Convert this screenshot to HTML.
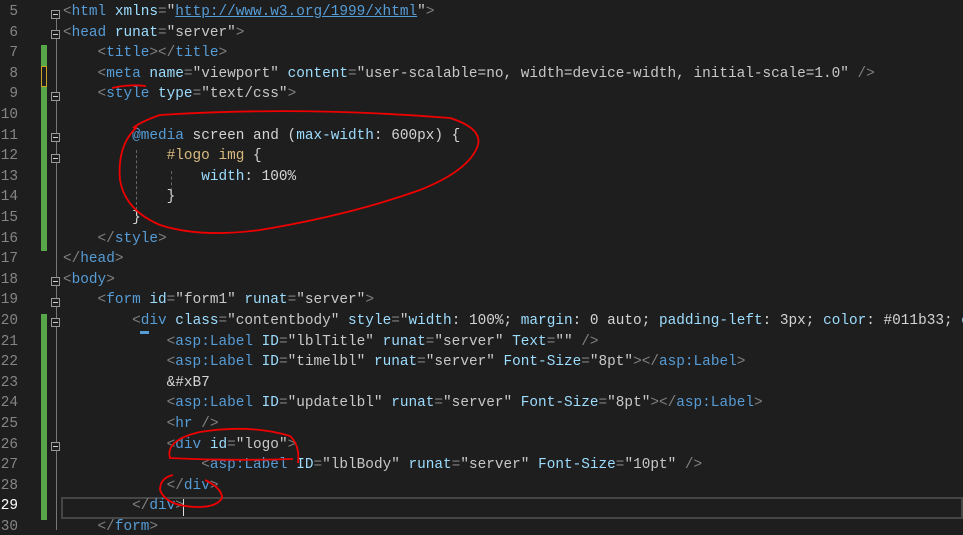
<!DOCTYPE html>
<html><head><meta charset="utf-8"><style>
body{margin:0;width:963px;height:530px;overflow:hidden;background:#1e1e1e;position:relative;font-family:"Liberation Mono",monospace;}
.ln{position:absolute;left:0;width:18px;text-align:right;color:#858585;font-size:14.4px;}
.c{position:absolute;left:63px;white-space:pre;font-size:14.4px;color:#d4d4d4;}
.b{color:#808080}.t{color:#569cd6}.a{color:#9cdcfe}.s{color:#c8c8c8}.y{color:#d7ba7d}.w{color:#d4d4d4}
.u{color:#569cd6;text-decoration:underline}
.fold{position:absolute;left:51px;width:9px;height:9px;border:1px solid #999;box-sizing:border-box;background:#1e1e1e}
.fold:after{content:"";position:absolute;left:1px;top:3px;width:5px;height:1px;background:#ccc}
</style></head><body>
<div style="position:absolute;left:41px;top:45px;width:6px;height:206px;background:#57a64a"></div>
<div style="position:absolute;left:41px;top:66px;width:6px;height:21px;background:#1e1e1e;border:1px solid #c9a227;box-sizing:border-box"></div>
<div style="position:absolute;left:41px;top:314px;width:6px;height:206px;background:#57a64a"></div>
<div style="position:absolute;left:56px;top:10px;width:1px;height:520px;background:#777"></div>
<div style="position:absolute;left:61px;top:497px;width:902px;height:22px;border:2px solid #464646;box-sizing:border-box"></div>
<div style="position:absolute;left:136px;top:150px;height:60px;border-left:1px dashed #666"></div>
<div style="position:absolute;left:171px;top:171px;height:20px;border-left:1px dashed #666"></div>
<div style="position:absolute;left:140px;top:331px;width:9px;height:3px;background:#569cd6"></div>
<div style="position:absolute;left:183px;top:499px;width:1px;height:17px;background:#ddd"></div>
<div class="fold" style="top:10px"></div><div class="fold" style="top:30px"></div>
<div class="fold" style="top:92px"></div><div class="fold" style="top:133px"></div>
<div class="fold" style="top:154px"></div><div class="fold" style="top:277px"></div>
<div class="fold" style="top:298px"></div><div class="fold" style="top:318px"></div>
<div class="fold" style="top:442px"></div>
<div class="ln" style="top:4px">5</div><div class="c" style="top:4px"><span class="b">&lt;</span><span class="t">html</span> <span class="a">xmlns</span><span class="b">=</span><span class="s">"</span><span class="u">http://www.w3.org/1999/xhtml</span><span class="s">"</span><span class="b">&gt;</span></div>
<div class="ln" style="top:24.6px">6</div><div class="c" style="top:24.6px"><span class="b">&lt;</span><span class="t">head</span> <span class="a">runat</span><span class="b">=</span><span class="s">"server"</span><span class="b">&gt;</span></div>
<div class="ln" style="top:45.2px">7</div><div class="c" style="top:45.2px">    <span class="b">&lt;</span><span class="t">title</span><span class="b">&gt;&lt;/</span><span class="t">title</span><span class="b">&gt;</span></div>
<div class="ln" style="top:65.8px">8</div><div class="c" style="top:65.8px">    <span class="b">&lt;</span><span class="t">meta</span> <span class="a">name</span><span class="b">=</span><span class="s">"viewport"</span> <span class="a">content</span><span class="b">=</span><span class="s">"user-scalable=no, width=device-width, initial-scale=1.0"</span> <span class="b">/&gt;</span></div>
<div class="ln" style="top:86.4px">9</div><div class="c" style="top:86.4px">    <span class="b">&lt;</span><span class="t">style</span> <span class="a">type</span><span class="b">=</span><span class="s">"text/css"</span><span class="b">&gt;</span></div>
<div class="ln" style="top:107px">10</div>
<div class="ln" style="top:127.6px">11</div><div class="c" style="top:127.6px">        <span class="t">@media</span> screen and (<span class="a">max-width</span>: 600px) {</div>
<div class="ln" style="top:148.2px">12</div><div class="c" style="top:148.2px">            <span class="y">#logo img</span> {</div>
<div class="ln" style="top:168.8px">13</div><div class="c" style="top:168.8px">                <span class="a">width</span>: 100%</div>
<div class="ln" style="top:189.4px">14</div><div class="c" style="top:189.4px">            }</div>
<div class="ln" style="top:210px">15</div><div class="c" style="top:210px">        }</div>
<div class="ln" style="top:230.6px">16</div><div class="c" style="top:230.6px">    <span class="b">&lt;/</span><span class="t">style</span><span class="b">&gt;</span></div>
<div class="ln" style="top:251.2px">17</div><div class="c" style="top:251.2px"><span class="b">&lt;/</span><span class="t">head</span><span class="b">&gt;</span></div>
<div class="ln" style="top:271.8px">18</div><div class="c" style="top:271.8px"><span class="b">&lt;</span><span class="t">body</span><span class="b">&gt;</span></div>
<div class="ln" style="top:292.4px">19</div><div class="c" style="top:292.4px">    <span class="b">&lt;</span><span class="t">form</span> <span class="a">id</span><span class="b">=</span><span class="s">"form1"</span> <span class="a">runat</span><span class="b">=</span><span class="s">"server"</span><span class="b">&gt;</span></div>
<div class="ln" style="top:313px">20</div><div class="c" style="top:313px">        <span class="b">&lt;</span><span class="t">div</span> <span class="a">class</span><span class="b">=</span><span class="s">"contentbody"</span> <span class="a">style</span><span class="b">=</span><span class="s">"</span><span class="a">width</span>: 100%; <span class="a">margin</span>: 0 auto; <span class="a">padding-left</span>: 3px; <span class="a">color</span>: #011b33; <span class="a">c</span></div>
<div class="ln" style="top:333.6px">21</div><div class="c" style="top:333.6px">            <span class="b">&lt;</span><span class="t">asp:Label</span> <span class="a">ID</span><span class="b">=</span><span class="s">"lblTitle"</span> <span class="a">runat</span><span class="b">=</span><span class="s">"server"</span> <span class="a">Text</span><span class="b">=</span><span class="s">""</span> <span class="b">/&gt;</span></div>
<div class="ln" style="top:354.2px">22</div><div class="c" style="top:354.2px">            <span class="b">&lt;</span><span class="t">asp:Label</span> <span class="a">ID</span><span class="b">=</span><span class="s">"timelbl"</span> <span class="a">runat</span><span class="b">=</span><span class="s">"server"</span> <span class="a">Font-Size</span><span class="b">=</span><span class="s">"8pt"</span><span class="b">&gt;&lt;/</span><span class="t">asp:Label</span><span class="b">&gt;</span></div>
<div class="ln" style="top:374.8px">23</div><div class="c" style="top:374.8px">            &amp;#xB7</div>
<div class="ln" style="top:395.4px">24</div><div class="c" style="top:395.4px">            <span class="b">&lt;</span><span class="t">asp:Label</span> <span class="a">ID</span><span class="b">=</span><span class="s">"updatelbl"</span> <span class="a">runat</span><span class="b">=</span><span class="s">"server"</span> <span class="a">Font-Size</span><span class="b">=</span><span class="s">"8pt"</span><span class="b">&gt;&lt;/</span><span class="t">asp:Label</span><span class="b">&gt;</span></div>
<div class="ln" style="top:416px">25</div><div class="c" style="top:416px">            <span class="b">&lt;</span><span class="t">hr</span> <span class="b">/&gt;</span></div>
<div class="ln" style="top:436.6px">26</div><div class="c" style="top:436.6px">            <span class="b">&lt;</span><span class="t">div</span> <span class="a">id</span><span class="b">=</span><span class="s">"logo"</span><span class="b">&gt;</span></div>
<div class="ln" style="top:457.2px">27</div><div class="c" style="top:457.2px">                <span class="b">&lt;</span><span class="t">asp:Label</span> <span class="a">ID</span><span class="b">=</span><span class="s">"lblBody"</span> <span class="a">runat</span><span class="b">=</span><span class="s">"server"</span> <span class="a">Font-Size</span><span class="b">=</span><span class="s">"10pt"</span> <span class="b">/&gt;</span></div>
<div class="ln" style="top:477.8px">28</div><div class="c" style="top:477.8px">            <span class="b">&lt;/</span><span class="t">div</span><span class="b">&gt;</span></div>
<div class="ln" style="top:498.4px;color:#fff">29</div><div class="c" style="top:498.4px">        <span class="b">&lt;/</span><span class="t">div</span><span class="b">&gt;</span></div>
<div class="ln" style="top:519px">30</div><div class="c" style="top:519px">    <span class="b">&lt;/</span><span class="t">form</span><span class="b">&gt;</span></div>
<svg width="963" height="530" style="position:absolute;left:0;top:0" fill="none" stroke="#e00" stroke-width="1.8">
<path d="M112 88 Q128 84 146 86"/>
<path d="M133 128 Q140 122 160 115 Q300 106 450 118 Q482 128 478 145 Q470 170 420 190 Q350 215 260 230 Q200 238 160 225 Q125 210 120 180 Q117 145 137 127"/>
<path d="M170 458 Q165 440 200 432 Q250 424 290 436 Q300 445 298 463"/>
<path d="M169 458 Q230 461 293 459"/>
<path d="M173 475 Q160 478 160 490 Q165 503 185 506 Q215 510 222 498 Q222 488 205 480"/>
</svg>
</body></html>
